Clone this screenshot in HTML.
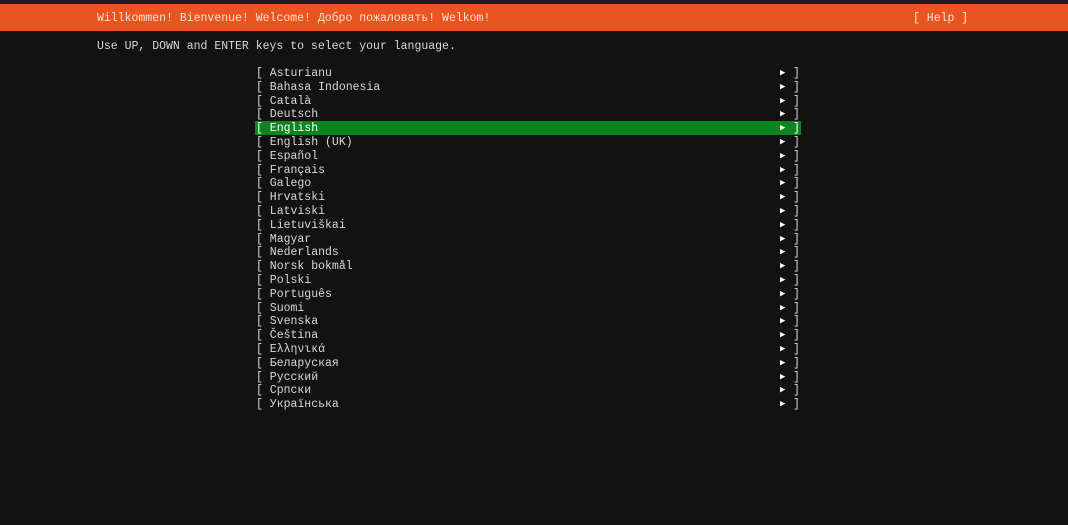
<!DOCTYPE html>
<html><head><meta charset="utf-8"><style>
html,body{margin:0;padding:0;}
body{width:1068px;height:525px;background:#121212;position:relative;overflow:hidden;
font-family:"Liberation Mono","DejaVu Sans Mono",monospace;font-size:11.5px;color:#d8d8d8;}
.top{position:absolute;left:0;top:0;width:1068px;height:4px;background:#1c1c1c;}
.hdr{position:absolute;left:0;top:4px;width:1068px;height:27px;background:#e95420;color:#fbe3d6;}
.t{position:absolute;white-space:pre;line-height:13.8px;}
.row{position:absolute;left:255px;width:546px;height:13.8px;line-height:13.8px;white-space:pre;}
.row .n{position:absolute;left:1px;top:1px;}
.row .a{position:absolute;left:525px;top:1px;font-size:9px;color:#fff;}
.row .b{position:absolute;left:538px;top:1px;}
.sel{background:#0e8420;color:#fff;}
</style></head><body>
<div class="top"></div>
<div class="hdr">
<div class="t" style="left:97px;top:8px;">Willkommen! Bienvenue! Welcome! Добро пожаловать! Welkom!</div>
<div class="t" style="left:913px;top:8px;">[ Help ]</div>
</div>
<div class="t" style="left:97px;top:40px;">Use UP, DOWN and ENTER keys to select your language.</div>
<div id="list"></div>
<script>
var L=["Asturianu","Bahasa Indonesia","Català","Deutsch","English","English (UK)","Español","Français","Galego","Hrvatski","Latviski","Lietuviškai","Magyar","Nederlands","Norsk bokmål","Polski","Português","Suomi","Svenska","Čeština","Ελληνικά","Беларуская","Русский","Српски","Українська"];
var h="";
for(var i=0;i<L.length;i++){
h+='<div class="row'+(i==4?' sel':'')+'" style="top:'+(66+i*13.8).toFixed(1)+'px"><span class="n">[ '+L[i]+'</span><span class="a">▶</span><span class="b">]</span></div>';
}
document.getElementById("list").innerHTML=h;
</script>
</body></html>
